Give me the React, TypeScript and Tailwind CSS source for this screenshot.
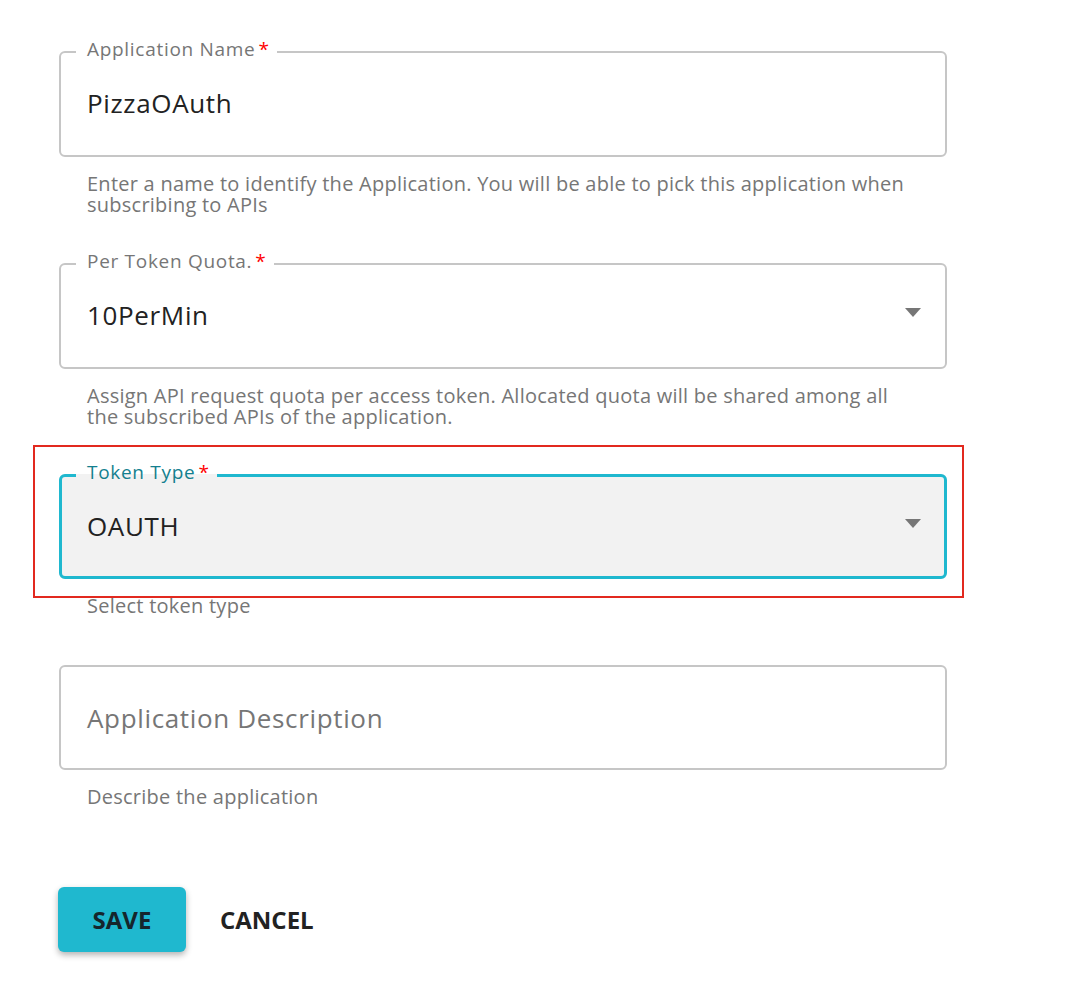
import React from "react";

const font = { fontFamily: '"Open Sans", "Noto Sans", sans-serif' };

function Caret() {
  return (
    <svg width="16" height="9" viewBox="0 0 16 9" className="mb-[6px] shrink-0">
      <path d="M0 0 L16 0 L8 9 Z" fill="#767676" />
    </svg>
  );
}

function Legend({ text, focused }: { text: string; focused?: boolean }) {
  return (
    <legend
      className={`pl-[11px] pr-[7px] pb-[5px] text-[19px] leading-[19px] tracking-[0.7px] ${
        focused ? "ml-[14px] text-[#147f8f]" : "ml-[15px] text-[#767676]"
      }`}
    >
      {text}
      <span className="ml-[3px] text-[#ff0000]">*</span>
    </legend>
  );
}

function Helper({ children }: { children: React.ReactNode }) {
  return (
    <p className="mt-4 pl-7 pr-[36px] text-[20px] leading-[21px] tracking-[0.25px] text-[#767676]">
      {children}
    </p>
  );
}

export default function App() {
  return (
    <div className="min-h-[994px] bg-white pt-[40px] pl-[59px]" style={font}>
      <div className="w-[888px]">
        {/* application name */}
        <fieldset className="rounded-md border-2 border-[#c6c6c6]">
          <Legend text="Application Name" />
          <div className="pl-[26px] pr-6 pt-[23px] pb-[36px] text-[26px] leading-[32px] tracking-[0.65px] text-[#222]">
            PizzaOAuth
          </div>
        </fieldset>
        <Helper>
          Enter a name to identify the Application. You will be able to pick this application when
          subscribing to APIs
        </Helper>

        {/* quota */}
        <fieldset className="mt-[37px] rounded-md border-2 border-[#c6c6c6]">
          <Legend text="Per Token Quota." />
          <div className="flex items-center justify-between pl-[26px] pr-6 pt-[23px] pb-[36px]">
            <span className="text-[26px] leading-[32px] tracking-[0.65px] text-[#222]">10PerMin</span>
            <Caret />
          </div>
        </fieldset>
        <Helper>
          Assign API request quota per access token. Allocated quota will be shared among all the
          subscribed APIs of the application.
        </Helper>

        {/* token type */}
        <div className="relative mt-[36px]">
          <fieldset className="rounded-md border-[3px] border-[#1fb8cf] bg-[#f2f2f2]">
            <Legend text="Token Type" focused />
            <div className="flex items-center justify-between pl-[25px] pr-[23px] pt-[23px] pb-[34px]">
              <span className="text-[26px] leading-[32px] tracking-[0.65px] text-[#222]">OAUTH</span>
              <Caret />
            </div>
          </fieldset>
          <div className="pointer-events-none absolute -left-[26px] -right-[17px] -top-[18px] -bottom-[19px] border-2 border-[#e2291f]" />
        </div>
        <Helper>Select token type</Helper>

        {/* description */}
        <div className="mt-[49px] flex h-[105px] items-center rounded-md border-2 border-[#c6c6c6] pl-[26px]">
          <span className="text-[26px] leading-[32px] tracking-[0.65px] text-[#767676]">
            Application Description
          </span>
        </div>
        <Helper>Describe the application</Helper>

        <div className="mt-20 flex items-center">
          <button className="-ml-px flex h-[65px] w-[128px] items-center justify-center rounded-md bg-[#1fb8cf] text-[24px] font-bold text-[#15262c] shadow-[0_3px_6px_rgba(0,0,0,0.3)]">
            SAVE
          </button>
          <button className="ml-[34px] text-[24px] font-bold text-[#222]">CANCEL</button>
        </div>
      </div>
    </div>
  );
}
